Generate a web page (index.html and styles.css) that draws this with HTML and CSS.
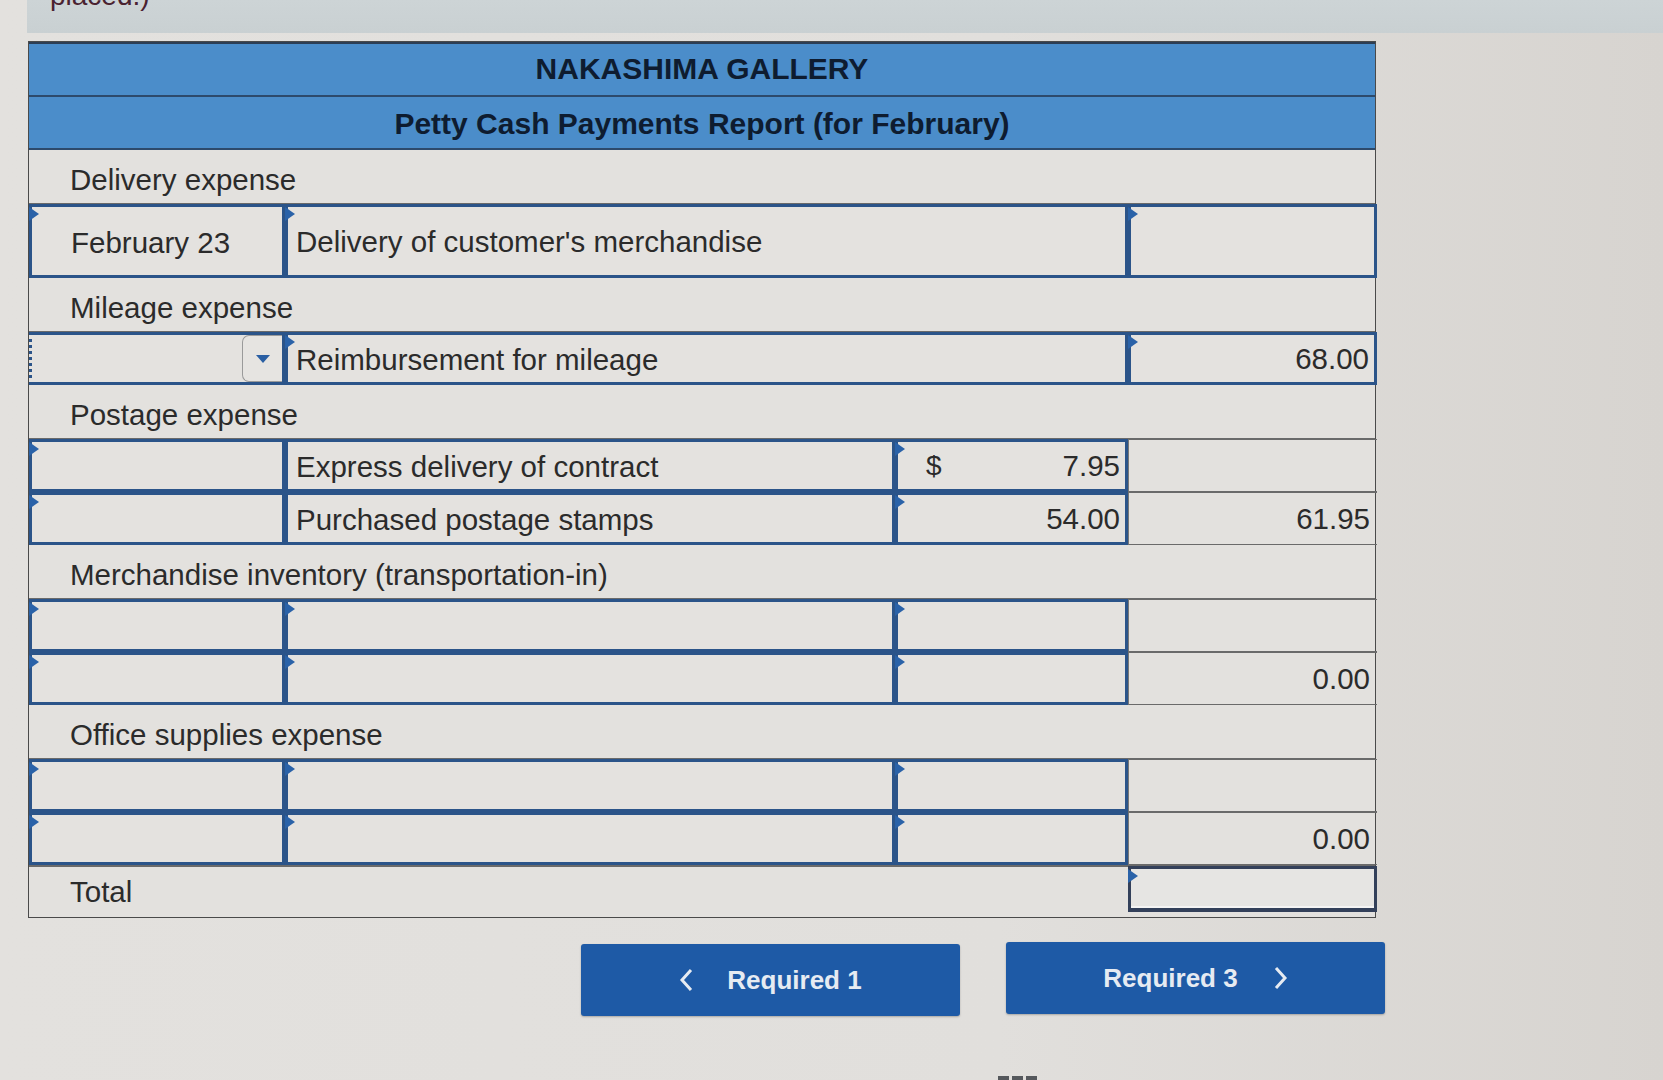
FILE: index.html
```html
<!DOCTYPE html>
<html lang="en">
<head>
<meta charset="utf-8">
<title>Petty Cash Payments Report</title>
<link rel="stylesheet" href="styles.css">
</head>
<body>
<div class="page">
  <div class="topband"><span class="cut">placed.)</span></div>

  <div class="report">
    <div class="head h1">NAKASHIMA GALLERY</div>
    <div class="head h2">Petty Cash Payments Report (for February)</div>

    <div class="label">Delivery expense</div>
    <div class="row tall">
      <div class="cell inp flag date">February 23</div>
      <div class="cell inp flag desc span2">Delivery of customer's merchandise</div>
      <div class="cell inp flag num"></div>
    </div>

    <div class="label">Mileage expense</div>
    <div class="row">
      <div class="cell inp sel">
        <span class="drop"><svg width="16" height="10" viewBox="0 0 16 10"><path d="M1 1 L15 1 L8 9 Z" fill="#2a5fa3"/></svg></span>
      </div>
      <div class="cell inp flag desc span2">Reimbursement for mileage</div>
      <div class="cell inp flag num">68.00</div>
    </div>

    <div class="label">Postage expense</div>
    <div class="row">
      <div class="cell inp flag"></div>
      <div class="cell inp desc">Express delivery of contract</div>
      <div class="cell inp flag num amt"><span class="dollar">$</span>7.95</div>
      <div class="cell calc num"></div>
    </div>
    <div class="row">
      <div class="cell inp flag"></div>
      <div class="cell inp desc">Purchased postage stamps</div>
      <div class="cell inp flag num">54.00</div>
      <div class="cell calc num">61.95</div>
    </div>

    <div class="label">Merchandise inventory (transportation-in)</div>
    <div class="row">
      <div class="cell inp flag"></div>
      <div class="cell inp flag desc"></div>
      <div class="cell inp flag num"></div>
      <div class="cell calc num"></div>
    </div>
    <div class="row">
      <div class="cell inp flag"></div>
      <div class="cell inp flag desc"></div>
      <div class="cell inp flag num"></div>
      <div class="cell calc num">0.00</div>
    </div>

    <div class="label">Office supplies expense</div>
    <div class="row">
      <div class="cell inp flag"></div>
      <div class="cell inp flag desc"></div>
      <div class="cell inp flag num"></div>
      <div class="cell calc num"></div>
    </div>
    <div class="row">
      <div class="cell inp flag"></div>
      <div class="cell inp flag desc"></div>
      <div class="cell inp flag num"></div>
      <div class="cell calc num">0.00</div>
    </div>

    <div class="row total">
      <div class="cell totlabel">Total</div>
      <div class="cell inp flag num totbox"></div>
    </div>
  </div>

  <div class="nav">
    <button class="btn prev">
      <svg class="chev" width="14" height="24" viewBox="0 0 14 24"><path d="M12 2 L3 12 L12 22" fill="none" stroke="#e6ebf2" stroke-width="3"/></svg>
      <span>Required 1</span>
    </button>
    <button class="btn next">
      <span>Required 3</span>
      <svg class="chev" width="14" height="24" viewBox="0 0 14 24"><path d="M2 2 L11 12 L2 22" fill="none" stroke="#e6ebf2" stroke-width="3"/></svg>
    </button>
  </div>

  <div class="bottommark"><span></span><span></span><span></span></div>
</div>
</body>
</html>
```

FILE: styles.css
```css
* { box-sizing: border-box; }

html, body {
  margin: 0;
  padding: 0;
}

body {
  width: 1663px;
  height: 1080px;
  overflow: hidden;
  font-family: "Liberation Sans", Arial, sans-serif;
  color: #2b2b2b;
  background: linear-gradient(90deg, #e3e1de 0%, #e1dfdc 60%, #d7d4d0 100%);
}

.page {
  position: relative;
  height: 1080px;
}

.topband {
  height: 33px;
  margin-left: 27px;
  overflow: hidden;
  background: linear-gradient(180deg, #cdd4d6 0%, #c9d0d2 100%);
  padding-left: 23px;
}

.cut {
  display: block;
  font-size: 28px;
  line-height: 28px;
  margin-top: -18px;
  color: #4a2230;
}

.report {
  margin: 8px 0 0 28px;
  width: 1348px;
  border: 1px solid #4a4a4a;
  background: #e3e1de;
}

.head {
  background: #4b8dca;
  color: #0e1c30;
  font-weight: bold;
  font-size: 30px;
  display: flex;
  align-items: center;
  justify-content: center;
}

.h1 {
  height: 55px;
  border-top: 2px solid #2c3e55;
  border-bottom: 2px solid #2d4a6c;
  padding-bottom: 2px;
}

.h2 {
  height: 53px;
  border-bottom: 2px solid #2d4a6c;
  padding-top: 2px;
}

.label {
  height: 54px;
  display: flex;
  align-items: center;
  padding-left: 41px;
  padding-top: 6px;
  font-size: 29.5px;
  border-bottom: 1px solid #6a6a6a;
}

.row {
  display: grid;
  grid-template-columns: 256px 610px 233px 249px;
  height: 53px;
}

.row.tall { height: 74px; }

.cell {
  display: flex;
  align-items: center;
  font-size: 29.5px;
  position: relative;
  min-width: 0;
  white-space: nowrap;
}

.span2 { grid-column: span 2; }

.inp {
  border: 3px solid #2b5489;
  background: #e4e2df;
}

.flag::before {
  content: "";
  position: absolute;
  top: 0;
  left: -3px;
  border-top: 7px solid transparent;
  border-bottom: 7px solid transparent;
  border-left: 10px solid #2a62a8;
}

.date { padding-left: 39px; padding-top: 4px; }
.desc { padding-left: 8px; padding-top: 2px; }

.num {
  justify-content: flex-end;
  padding-right: 5px;
}

.amt { justify-content: space-between; padding-left: 28px; }
.dollar { font-size: 28px; }

.calc {
  border-top: 1px solid #6a6a6a;
  border-bottom: 1px solid #6a6a6a;
  border-left: 1px solid #777;
  padding-right: 7px;
}

.sel {
  border-left: 3px dotted #2b5489;
  justify-content: flex-end;
  padding: 0;
}

.drop {
  width: 40px;
  height: 100%;
  border: 1px solid #9a9a9a;
  border-right: none;
  border-radius: 7px 0 0 7px;
  display: flex;
  align-items: center;
  justify-content: center;
  background: #e6e4e1;
}

.total {
  height: 52px;
  border-top: 1px solid #6a6a6a;
}

.totlabel {
  grid-column: span 3;
  padding-left: 41px;
  border-top: 1px solid #6a6a6a;
}

.totbox {
  height: 46px;
  border-width: 3px 3px 4px 3px;
  border-color: #33405a;
  background: #e6e5e3;
  box-shadow: inset 0 -2px 0 #f4f4f4;
}

.nav {
  display: flex;
  gap: 46px;
  margin: 26px 0 0 581px;
}

.btn {
  width: 379px;
  height: 72px;
  border: none;
  border-radius: 3px;
  background: #1e5aa6;
  color: #e6ebf2;
  font-family: "Liberation Sans", Arial, sans-serif;
  font-weight: bold;
  font-size: 26px;
  display: flex;
  align-items: center;
  justify-content: center;
  gap: 34px;
  padding: 0;
  box-shadow: 0 1px 2px rgba(0,0,0,0.25);
}

.btn.next { margin-top: -2px; gap: 36px; }

.bottommark {
  position: absolute;
  left: 998px;
  bottom: 0;
  display: flex;
  gap: 3px;
}

.bottommark span {
  width: 11px;
  height: 4px;
  background: #55585c;
}
```
